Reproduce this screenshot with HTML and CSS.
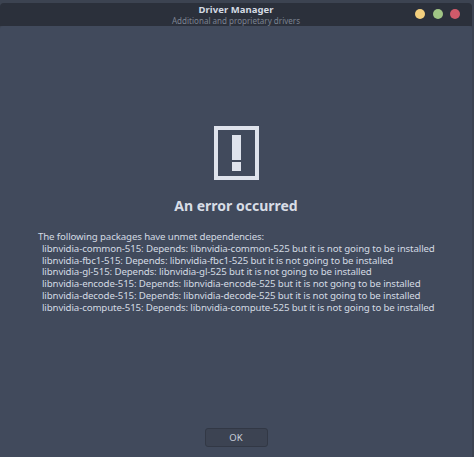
FILE: index.html
```html
<!DOCTYPE html>
<html lang="en">
<head>
  <meta charset="UTF-8">
  <title>Driver Manager</title>
  <link rel="stylesheet" href="styles.css">
</head>
<body>
  <div class="window">
    <header class="titlebar">
      <div class="title">Driver Manager</div>
      <div class="subtitle">Additional and proprietary drivers</div>
      <div class="controls">
        <span class="dot dot-min"></span>
        <span class="dot dot-max"></span>
        <span class="dot dot-close"></span>
      </div>
    </header>

    <main class="content">
      <svg class="error-icon" width="46" height="54" viewBox="0 0 46 54">
        <rect x="2" y="2" width="41" height="50" fill="none" stroke="#dfe3ec" stroke-width="4"/>
        <rect x="18" y="9" width="9" height="25" fill="#dfe3ec"/>
        <rect x="18" y="36" width="9" height="9" fill="#dfe3ec"/>
      </svg>
      <h1 class="error-title">An error occurred</h1>
      <div class="message">
        <p>The following packages have unmet dependencies:</p>
        <p class="pkg">libnvidia-common-515: Depends: libnvidia-common-525 but it is not going to be installed</p>
        <p class="pkg">libnvidia-fbc1-515: Depends: libnvidia-fbc1-525 but it is not going to be installed</p>
        <p class="pkg">libnvidia-gl-515: Depends: libnvidia-gl-525 but it is not going to be installed</p>
        <p class="pkg">libnvidia-encode-515: Depends: libnvidia-encode-525 but it is not going to be installed</p>
        <p class="pkg">libnvidia-decode-515: Depends: libnvidia-decode-525 but it is not going to be installed</p>
        <p class="pkg">libnvidia-compute-515: Depends: libnvidia-compute-525 but it is not going to be installed</p>
      </div>
      <button class="ok-btn">OK</button>
    </main>
  </div>
</body>
</html>
```

FILE: styles.css
```css
html, body {
  height: 100%;
}

body {
  margin: 0;
  background-color: #3c4351;
  font-family: "Noto Sans", sans-serif;
  overflow: hidden;
}

.window {
  height: 100%;
  padding: 3px 2px 0 0;
  box-sizing: border-box;
  display: flex;
  flex-direction: column;
}

.titlebar {
  position: relative;
  height: 23px;
  flex-shrink: 0;
  background-color: #2b303b;
  border-radius: 4px 4px 0 0;
  text-align: center;
}

.title {
  padding-top: 1px;
  font-size: 9.5px;
  line-height: 12px;
  font-weight: 700;
  letter-spacing: 0.05px;
  color: #d3dae3;
}

.subtitle {
  font-size: 8px;
  line-height: 9px;
  letter-spacing: 0.02px;
  color: #7c8391;
}

.controls {
  position: absolute;
  top: 6px;
  right: 12px;
  display: flex;
  gap: 7.5px;
}

.dot {
  width: 10px;
  height: 10px;
  border-radius: 50%;
}

.dot-min {
  background-color: #f3cf7e;
}

.dot-max {
  background-color: #a0c585;
}

.dot-close {
  background-color: #cf5a6a;
}

.content {
  flex: 1;
  background-color: #414a5c;
  border-radius: 3px 3px 0 0;
  display: flex;
  flex-direction: column;
  align-items: center;
  color: #d3dae3;
}

.error-icon {
  margin-top: 100px;
  margin-left: 1px;
}

.error-title {
  margin: 16px 0 0;
  font-size: 14px;
  line-height: 20px;
  font-weight: 700;
  color: #d8dde6;
}

.message {
  align-self: flex-start;
  margin: 15px 0 0 38px;
  font-size: 9.7px;
  line-height: 11.8px;
  letter-spacing: -0.125px;
  white-space: nowrap;
}

.message p {
  margin: 0;
}

.message .pkg {
  padding-left: 4px;
}

.ok-btn {
  margin-top: auto;
  margin-bottom: 10px;
  width: 63px;
  height: 19px;
  padding: 0;
  background-color: #3c4352;
  border: 1px solid #323845;
  border-radius: 3px;
  color: #c8ced9;
  font-family: "Noto Sans", sans-serif;
  font-size: 9.5px;
}
```
